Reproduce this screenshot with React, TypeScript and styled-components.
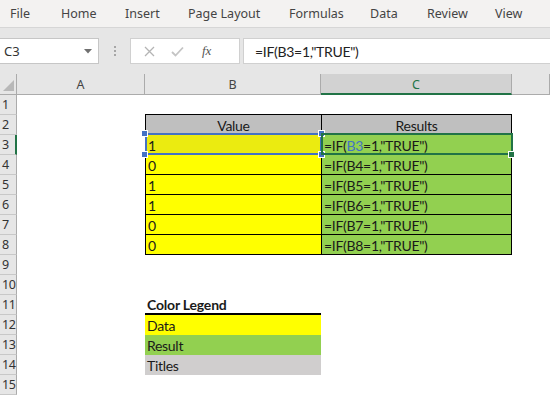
import React from "react";
import styled, { createGlobalStyle } from "styled-components";

const Global = createGlobalStyle`
  html, body { margin: 0; padding: 0; background: #ffffff; }
  body { width: 550px; height: 396px; overflow: hidden; }
  * { box-sizing: border-box; }
`;

const UI = `"Noto Sans", "Open Sans", sans-serif`;
const CELL = `"Lato", "Liberation Sans", sans-serif`;

const Page = styled.div`
  width: 550px;
  height: 396px;
  display: flex;
  flex-direction: column;
  overflow: hidden;
`;

const TabBar = styled.div`
  height: 28px;
  background: #f3f2f1;
  border-bottom: 1px solid #d6d6d6;
  display: flex;
  align-items: center;
  font-family: ${UI};
  font-size: 12.5px;
  color: #444;
  position: relative;
`;

const Tab = styled.span<{ $x: number }>`
  position: absolute;
  left: ${(p) => p.$x}px;
  top: 5px;
`;

const FormulaArea = styled.div`
  height: 46px;
  background: #e6e6e6;
  display: flex;
  align-items: flex-start;
  padding-top: 10px;
`;

const NameBox = styled.div`
  width: 99px;
  height: 26px;
  background: #fff;
  border: 1px solid #c6c6c6;
  border-left: none;
  display: flex;
  align-items: center;
  justify-content: space-between;
  padding: 0 6px 0 4px;
  font-family: ${UI};
  font-size: 13px;
  color: #333;
`;

const Dots = styled.div`
  width: 31px;
  display: flex;
  flex-direction: column;
  align-items: center;
  justify-content: center;
  gap: 2px;
  height: 26px;
  & > i {
    width: 2px;
    height: 2px;
    background: #a6a6a6;
    display: block;
  }
`;

const IconBox = styled.div`
  width: 110px;
  height: 26px;
  background: #fff;
  border: 1px solid #d0d0d0;
  display: flex;
  align-items: center;
  padding-left: 13px;
  gap: 16px;
  margin-right: 3px;
`;

const Fx = styled.span`
  font-family: "Liberation Serif", serif;
  font-style: italic;
  font-size: 13px;
  color: #555;
  margin-left: 2px;
`;

const FormulaInput = styled.div`
  flex: 1;
  height: 26px;
  background: #fff;
  border: 1px solid #d0d0d0;
  border-right: none;
  display: flex;
  align-items: center;
  padding-left: 11px;
  padding-top: 1px;
  font-family: ${CELL};
  font-size: 14px;
  letter-spacing: -0.3px;
  color: #222;
`;

const ColHeaderRow = styled.div`
  height: 21px;
  display: flex;
  background: #e6e6e6;
  border-bottom: 1px solid #ababab;
  font-family: ${UI};
  font-size: 12.5px;
  color: #444;
`;

const Corner = styled.div`
  width: 17px;
  border-right: 1px solid #ababab;
  position: relative;
`;

const ColHead = styled.div<{ $w: number; $sel?: boolean }>`
  width: ${(p) => p.$w}px;
  flex: ${(p) => (p.$w ? "none" : "1")};
  border-right: 1px solid #ababab;
  display: flex;
  align-items: center;
  justify-content: center;
  background: ${(p) => (p.$sel ? "#d2d2d2" : "transparent")};
  color: ${(p) => (p.$sel ? "#217346" : "#444")};
  border-bottom: ${(p) => (p.$sel ? "2px solid #217346" : "none")};
  margin-bottom: ${(p) => (p.$sel ? "-1px" : "0")};
  padding-top: ${(p) => (p.$sel ? "1px" : "0")};
`;

const Sheet = styled.div`
  position: relative;
  flex: 1;
`;

const Row = styled.div`
  height: 20px;
  display: flex;
`;

const RowHead = styled.div<{ $sel?: boolean }>`
  width: 17px;
  height: 20px;
  background: #e6e6e6;
  border-right: ${(p) => (p.$sel ? "2px solid #217346" : "1px solid #ababab")};
  border-bottom: 1px solid #c8c8c8;
  font-family: ${UI};
  font-size: 12.5px;
  color: #333;
  display: flex;
  align-items: center;
  padding-left: 2px;
  letter-spacing: -0.5px;
`;

const Cell = styled.div<{
  $w?: number;
  $bg?: string;
  $left?: boolean;
  $right?: boolean;
  $bottom?: number;
  $center?: boolean;
  $bold?: boolean;
}>`
  width: ${(p) => (p.$w ? `${p.$w}px` : "auto")};
  flex: ${(p) => (p.$w ? "none" : "1")};
  height: 20px;
  background: ${(p) => p.$bg || "#fff"};
  border-left: ${(p) => (p.$left ? "1px solid #000" : "none")};
  border-right: ${(p) => (p.$right ? "1px solid #000" : "none")};
  border-bottom: ${(p) => (p.$bottom ? `${p.$bottom}px solid #000` : "none")};
  font-family: ${CELL};
  font-size: 14px;
  letter-spacing: ${(p) => (p.$bold ? "-0.2px" : "-0.3px")};
  font-weight: ${(p) => (p.$bold ? 700 : 400)};
  color: #1a1a1a;
  display: flex;
  align-items: center;
  justify-content: ${(p) => (p.$center ? "center" : "flex-start")};
  padding-left: ${(p) => (p.$center ? "0" : "2px")};
  padding-top: 2px;
  white-space: nowrap;
  line-height: 1;
`;

const Ref = styled.span`
  color: #4472c4;
`;

const Frame = styled.div<{ $x: number; $y: number; $w: number; $h: number; $c: string }>`
  position: absolute;
  left: ${(p) => p.$x}px;
  top: ${(p) => p.$y}px;
  width: ${(p) => p.$w}px;
  height: ${(p) => p.$h}px;
  border: 2px solid ${(p) => p.$c};
  pointer-events: none;
`;

const Handle = styled.div<{ $x: number; $y: number; $c: string }>`
  position: absolute;
  left: ${(p) => p.$x}px;
  top: ${(p) => p.$y}px;
  width: 7px;
  height: 7px;
  background: ${(p) => p.$c};
  border: 1px solid #fff;
`;

const COLS = { A: 128, B: 176, C: 191 };

type RowData = { n: number; b?: React.ReactNode; c?: React.ReactNode; bBg?: string; cBg?: string; table?: boolean; top?: boolean; legend?: "title" | "item"; header?: boolean };

const rows: RowData[] = [
  { n: 1, top: true },
  { n: 2, b: "Value", c: "Results", bBg: "#bfbfbf", cBg: "#bfbfbf", table: true, header: true },
  { n: 3, b: "1", c: (<>=IF(<Ref>B3</Ref>=1,"TRUE")</>), bBg: "#ebeb10", cBg: "#92d050", table: true },
  { n: 4, b: "0", c: '=IF(B4=1,"TRUE")', bBg: "#ffff00", cBg: "#92d050", table: true },
  { n: 5, b: "1", c: '=IF(B5=1,"TRUE")', bBg: "#ffff00", cBg: "#92d050", table: true },
  { n: 6, b: "1", c: '=IF(B6=1,"TRUE")', bBg: "#ffff00", cBg: "#92d050", table: true },
  { n: 7, b: "0", c: '=IF(B7=1,"TRUE")', bBg: "#ffff00", cBg: "#92d050", table: true },
  { n: 8, b: "0", c: '=IF(B8=1,"TRUE")', bBg: "#ffff00", cBg: "#92d050", table: true },
  { n: 9 },
  { n: 10 },
  { n: 11, b: "Color Legend", legend: "title" },
  { n: 12, b: "Data", bBg: "#ffff00", legend: "item" },
  { n: 13, b: "Result", bBg: "#92d050", legend: "item" },
  { n: 14, b: "Titles", bBg: "#d0cece", legend: "item" },
  { n: 15 },
];

const tabs: [string, number][] = [
  ["File", 10],
  ["Home", 61],
  ["Insert", 125],
  ["Page Layout", 188],
  ["Formulas", 289],
  ["Data", 370],
  ["Review", 427],
  ["View", 495],
];

export default function App() {
  return (
    <Page>
      <Global />
      <TabBar>
        {tabs.map(([t, x]) => (
          <Tab key={t} $x={x}>{t}</Tab>
        ))}
      </TabBar>
      <FormulaArea>
        <NameBox>
          <span>C3</span>
          <svg width="8" height="5" viewBox="0 0 8 5">
            <path d="M0 0 L8 0 L4 4.5 Z" fill="#707070" />
          </svg>
        </NameBox>
        <Dots>
          <i />
          <i />
          <i />
        </Dots>
        <IconBox>
          <svg width="11" height="11" viewBox="0 0 11 11">
            <path d="M1 1 L10 10 M10 1 L1 10" stroke="#b4b4b4" strokeWidth="1.3" fill="none" />
          </svg>
          <svg width="13" height="11" viewBox="0 0 13 11">
            <path d="M1 6 L4.5 9.5 L12 1.5" stroke="#c4c4c4" strokeWidth="1.8" fill="none" />
          </svg>
          <Fx>fx</Fx>
        </IconBox>
        <FormulaInput>=IF(B3=1,"TRUE")</FormulaInput>
      </FormulaArea>
      <ColHeaderRow>
        <Corner>
          <svg width="16" height="20" viewBox="0 0 16 20" style={{ position: "absolute", left: 0, top: 0 }}>
            <path d="M3 17 L14 17 L14 6 Z" fill="#b8b8b8" />
          </svg>
        </Corner>
        <ColHead $w={COLS.A}>A</ColHead>
        <ColHead $w={COLS.B}>B</ColHead>
        <ColHead $w={COLS.C} $sel>C</ColHead>
        <ColHead $w={0} />
      </ColHeaderRow>
      <Sheet>
        {rows.map((r) => (
          <Row key={r.n}>
            <RowHead $sel={r.n === 3}>{r.n}</RowHead>
            <Cell $w={COLS.A} />
            {r.table ? (
              <>
                <Cell $w={COLS.B} $bg={r.bBg} $left $bottom={1} $center={r.header}>{r.b}</Cell>
                <Cell $w={COLS.C} $bg={r.cBg} $left $right $bottom={1} $center={r.header}>{r.c}</Cell>
              </>
            ) : r.top ? (
              <>
                <Cell $w={COLS.B} $bottom={1} />
                <Cell $w={COLS.C} $bottom={1} />
              </>
            ) : r.legend ? (
              <>
                <Cell $w={COLS.B} $bg={r.bBg} $bottom={r.legend === "title" ? 2 : 0} $bold={r.legend === "title"}>
                  {r.b}
                </Cell>
                <Cell $w={COLS.C} />
              </>
            ) : (
              <>
                <Cell $w={COLS.B} />
                <Cell $w={COLS.C} />
              </>
            )}
            <Cell />
          </Row>
        ))}
        <Frame $x={145} $y={38} $w={177} $h={22} $c="#4472c4" />
        <Handle $x={141} $y={35} $c="#4472c4" />
        <Handle $x={318} $y={35} $c="#4472c4" />
        <Handle $x={141} $y={56} $c="#4472c4" />
        <Handle $x={318} $y={56} $c="#4472c4" />
        <Frame $x={321} $y={38} $w={192} $h={22} $c="#217346" />
        <Handle $x={508} $y={56} $c="#217346" />
      </Sheet>
    </Page>
  );
}
